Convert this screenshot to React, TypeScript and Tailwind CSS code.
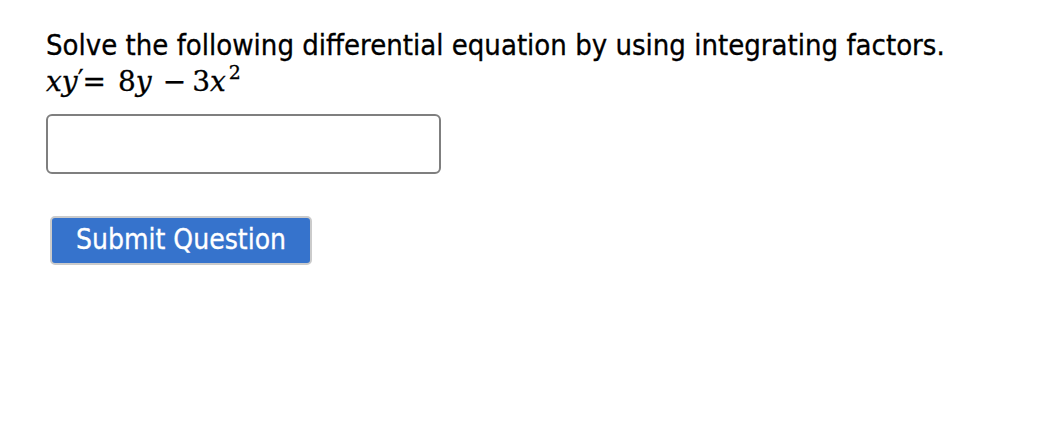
export default function App() {
  return (
    <div className="min-h-[430px] bg-white pt-[31px] pl-[46px] font-['DejaVu_Sans_Condensed','DejaVu_Sans',sans-serif] text-black">
      <p className="whitespace-nowrap text-[29px] leading-[29px] [-webkit-text-stroke:0.3px_black]">
        Solve the following differential equation by using integrating factors.
      </p>

      {/* equation */}
      <div className="mt-[4px] flex h-[36px] items-baseline whitespace-nowrap font-['DejaVu_Serif',serif] text-[28px] leading-[36px] [-webkit-text-stroke:0.3px_black]">
        <span className="italic">x</span>
        <span className="italic">y</span>
        <span className="relative -top-[2px] font-['DejaVu_Sans',sans-serif] text-[26px] leading-none">′</span>
        <span className="-ml-[1px]">=</span>
        <span className="ml-[12px]">8</span>
        <span className="italic">y</span>
        <span className="ml-[11px]">−</span>
        <span className="ml-[6px]">3</span>
        <span className="italic">x</span>
        <span className="relative -top-[12px] ml-[3px] text-[19px] leading-none">2</span>
      </div>

      <input
        type="text"
        className="mt-[14px] block h-[60px] w-[395px] rounded-[6px] border-2 border-[#7f7f7f] bg-white px-3 text-[24px] outline-none"
      />

      <button className="ml-[4px] mt-[42px] flex h-[49px] w-[262px] items-center justify-center rounded-[5px] border-2 border-[#cbcbcb] bg-[#3673cc] pb-[1px] text-[28px] leading-none text-white [-webkit-text-stroke:0.3px_white]">
        Submit Question
      </button>
    </div>
  );
}
